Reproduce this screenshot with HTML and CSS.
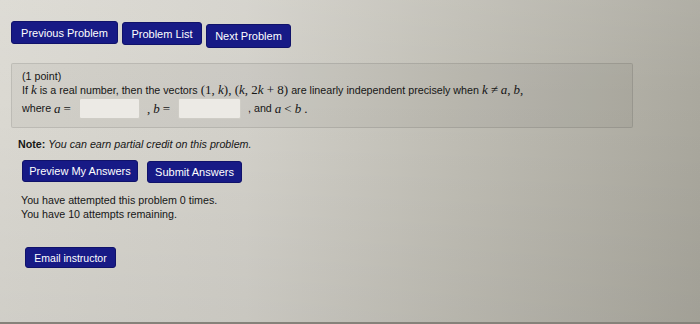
FILE: index.html
```html
<!DOCTYPE html>
<html>
<head>
    <meta charset="UTF-8">
    <link rel="stylesheet" href="styles.css">
</head>
<body>
    <div class="screen">
        <div class="nav">
            <button class="btn prev">Previous Problem</button>
            <button class="btn list">Problem List</button>
            <button class="btn next">Next Problem</button>
        </div>

        <div class="problem">
            <div class="line">(1 point)</div>
            <div class="line">If <span class="m">k</span> is a real number, then the vectors <span class="mr">(1, <i>k</i>), (<i>k</i>, 2<i>k</i> + 8)</span> are linearly independent precisely when <span class="m">k</span> <span class="mr">&ne;</span> <span class="m">a</span><span class="mr">,</span> <span class="m">b</span><span class="mr">,</span></div>
            <div class="line answers">
                where <span class="m">a</span> <span class="mr">=</span>
                <input type="text" class="ans a">
                <span class="mr">,</span> <span class="m">b</span> <span class="mr">=</span>
                <input type="text" class="ans b">
                , and <span class="m">a</span> <span class="mr">&lt;</span> <span class="m">b</span><span class="mr">.</span>
            </div>
        </div>

        <p class="note"><b>Note:</b> <i>You can earn partial credit on this problem.</i></p>

        <div class="actions">
            <button class="btn preview">Preview My Answers</button>
            <button class="btn submit">Submit Answers</button>
        </div>

        <div class="attempts">
            You have attempted this problem 0 times.<br>
            You have 10 attempts remaining.
        </div>

        <div class="email">
            <button class="btn mail">Email instructor</button>
        </div>
    </div>
</body>
</html>
```

FILE: styles.css
```css
/* page */
html, body {
    margin: 0;
    height: 100%;
}

body {
    font-family: "Liberation Sans", Arial, sans-serif;
    color: #161616;
    background:
        linear-gradient(to bottom, rgba(255,255,255,0.08) 0%, rgba(0,0,0,0) 30%, rgba(0,0,0,0.05) 100%),
        linear-gradient(to right, #dbd9d2 0%, #d3d1ca 35%, #c0beb5 65%, #aaa89e 100%);
    overflow: hidden;
}

.screen {
    height: 324px;
    border-bottom: 2px solid #85827a;
    padding: 21px 0 0 11px;
    box-sizing: border-box;
}

/* buttons */
.btn {
    font-family: "Liberation Sans", Arial, sans-serif;
    font-size: 11px;
    color: #fff;
    background: #171a86;
    border: 1px solid #10126a;
    border-radius: 3px;
    height: 23px;
    padding: 0;
    cursor: pointer;
}

.nav {
    display: flex;
    gap: 4px;
    align-items: flex-start;
}

.nav .prev { width: 107px; }
.nav .list { width: 80px; margin-top: 1px; }
.nav .next { width: 85px; margin-top: 3px; height: 24px; }

/* problem box */
.problem {
    margin-top: 15px;
    width: 622px;
    box-sizing: border-box;
    padding: 6px 10px 8px;
    background: rgba(0,0,0,0.04);
    border: 1px solid rgba(0,0,0,0.1);
    border-radius: 2px;
    font-size: 10.7px;
    line-height: 13px;
}

.m {
    font-family: "Liberation Serif", "Times New Roman", serif;
    font-style: italic;
    font-size: 13px;
}

.mr {
    font-family: "Liberation Serif", "Times New Roman", serif;
    font-size: 13px;
}

.answers {
    display: flex;
    align-items: center;
    gap: 3px;
    margin-top: 1px;
}

.ans {
    height: 21px;
    box-sizing: border-box;
    border: 1px solid #cfcdc6;
    border-radius: 2px;
    background: #eceae5;
    margin: 0 4px 0 5px;
}

.ans.a { width: 61px; }
.ans.b { width: 63px; }

/* note */
.note {
    margin: 10px 0 0 7px;
    font-size: 10.7px;
}

.actions {
    display: flex;
    gap: 9px;
    margin: 10px 0 0 11px;
}

.actions .preview { width: 116px; height: 22px; }
.actions .submit { width: 95px; height: 22px; margin-top: 1px; }

.attempts {
    margin: 10px 0 0 10px;
    font-size: 10.7px;
    line-height: 14px;
}

.email {
    margin: 26px 0 0 14px;
}

.email .mail {
    width: 91px;
    height: 21px;
    font-size: 10.5px;
}
```
